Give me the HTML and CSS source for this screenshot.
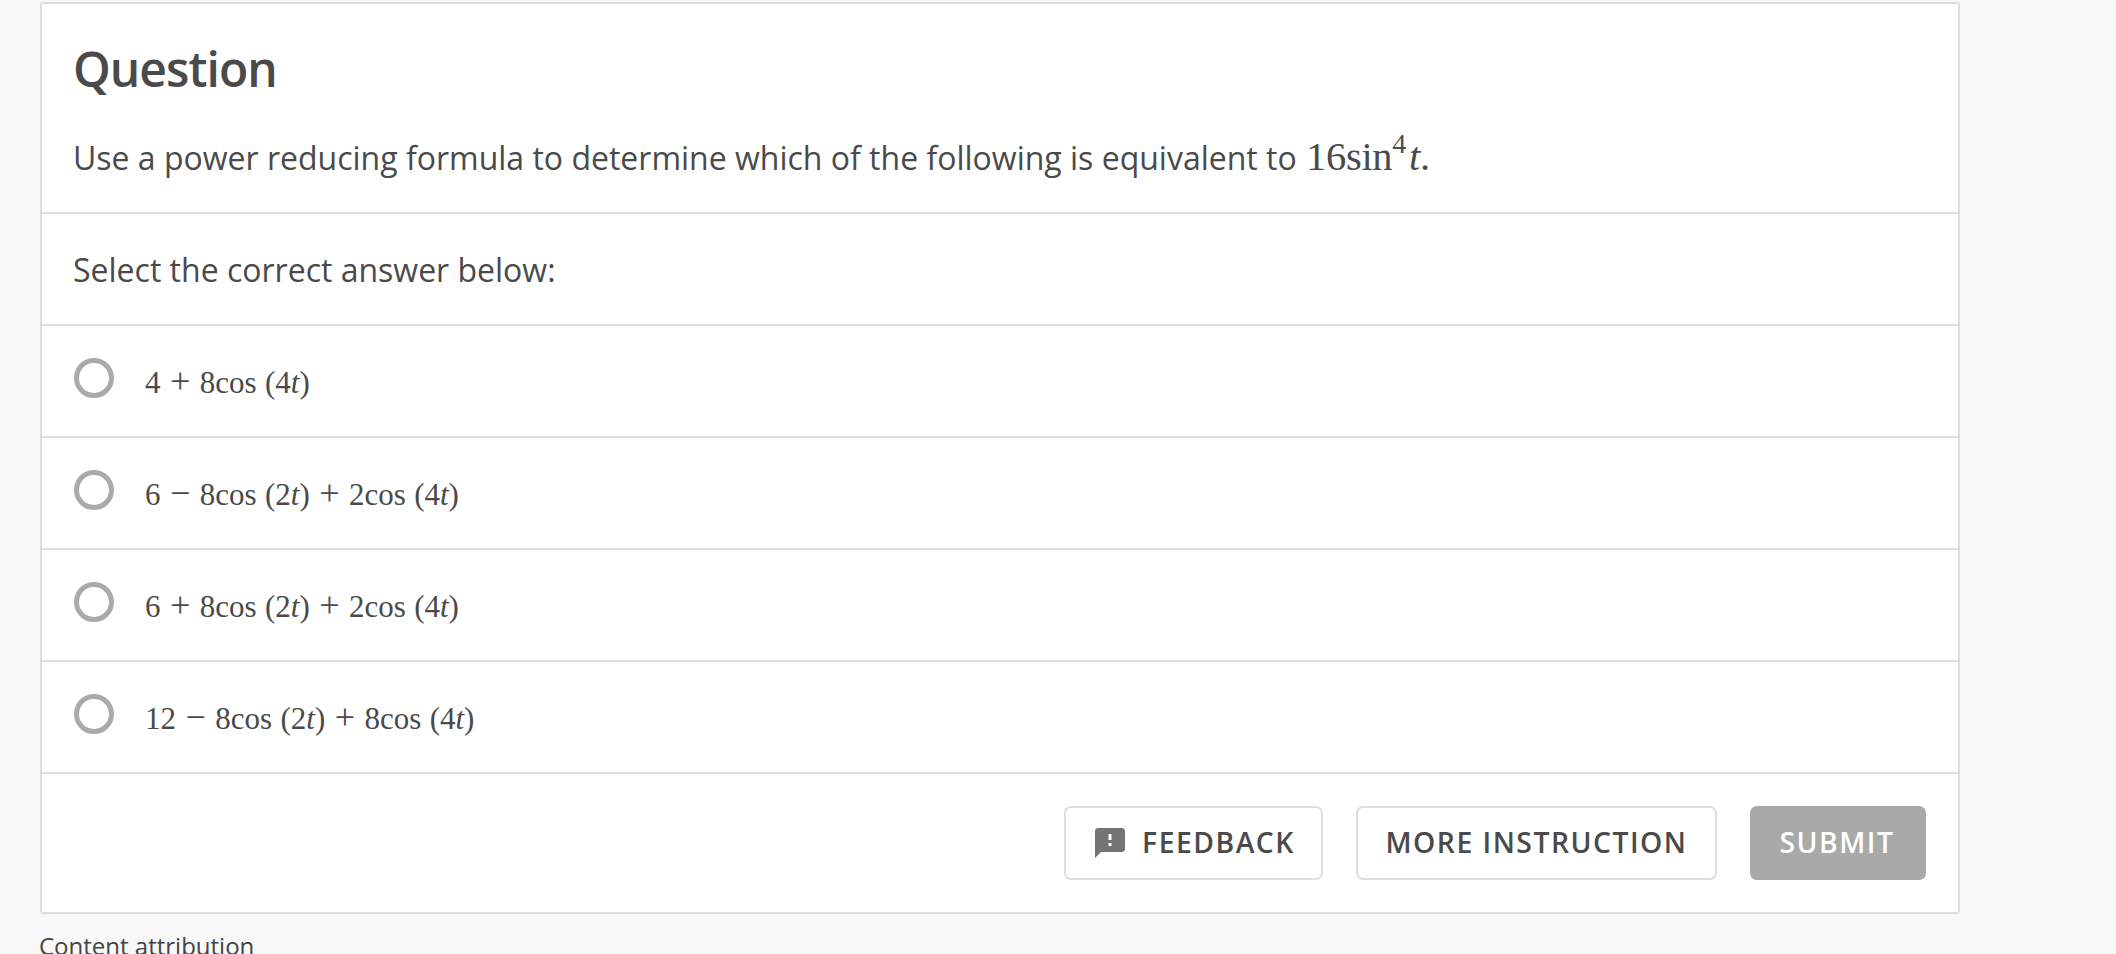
FILE: index.html
```html
<!DOCTYPE html>
<html lang="en">
<head>
<meta charset="utf-8">
<title>Question</title>
<link rel="stylesheet" href="styles.css">
</head>
<body>
<main class="page">
  <section class="card">
    <header class="head">
      <h1 class="title">Question</h1>
      <p class="prompt">Use a power reducing formula to determine which of the following is equivalent to <span class="math big">16sin<sup class="sup">4</sup><i class="t">t</i>.</span></p>
    </header>
    <div class="instruction">Select the correct answer below:</div>
    <ul class="options">
      <li class="option"><span class="radio"></span><span class="math">4<span class="op">+</span>8cos<span class="fn">(4<i>t</i>)</span></span></li>
      <li class="option"><span class="radio"></span><span class="math">6<span class="op">−</span>8cos<span class="fn">(2<i>t</i>)</span><span class="op">+</span>2cos<span class="fn">(4<i>t</i>)</span></span></li>
      <li class="option"><span class="radio"></span><span class="math">6<span class="op">+</span>8cos<span class="fn">(2<i>t</i>)</span><span class="op">+</span>2cos<span class="fn">(4<i>t</i>)</span></span></li>
      <li class="option"><span class="radio"></span><span class="math">12<span class="op">−</span>8cos<span class="fn">(2<i>t</i>)</span><span class="op">+</span>8cos<span class="fn">(4<i>t</i>)</span></span></li>
    </ul>
    <footer class="actions">
      <button class="btn feedback" type="button"><svg class="icon" viewBox="0 0 24 24" aria-hidden="true"><path d="M20 2H4c-1.1 0-1.99.9-1.99 2L2 22l4-4h14c1.1 0 2-.9 2-2V4c0-1.1-.9-2-2-2zm-7 12h-2v-2h2v2zm0-4h-2V6h2v4z"/></svg>Feedback</button>
      <button class="btn more" type="button">More Instruction</button>
      <button class="btn submit" type="button">Submit</button>
    </footer>
  </section>
  <p class="attribution">Content attribution</p>
</main>
</body>
</html>
```
FILE: styles.css
```css
* { box-sizing: border-box; }
html, body { margin: 0; height: 100%; overflow: hidden; }
body { background: #f8f8f8; color: #4a4a4a; font-family: "Open Sans", sans-serif; }
.page { width: 1920px; margin-left: 40px; padding-top: 2px; }
.card { background: #fff; border: 2px solid #dedede; border-radius: 3px; }
.head { height: 210px; padding: 33px 31px 0; border-bottom: 2px solid #dedede; }
.title { margin: 0; font-size: 48px; line-height: 64px; font-weight: 600; letter-spacing: -0.95px; }
.prompt { margin: 32px 0 0; font-size: 32px; line-height: 50px; white-space: nowrap; }
.instruction { height: 112px; padding: 0 31px; display: flex; align-items: center; border-bottom: 2px solid #dedede; font-size: 32px; }
.options { list-style: none; margin: 0; padding: 0; }
.option { height: 112px; padding: 0 31px 6px 32px; display: flex; align-items: center; gap: 31px; border-bottom: 2px solid #dedede; }
.radio { width: 40px; height: 40px; flex: none; border: 5px solid #aaa; border-radius: 50%; }
.math { font-family: "Liberation Serif", serif; font-size: 31px; line-height: 40px; padding-top: 10px; white-space: nowrap; }
.op { margin: 0 9.5px; font-size: 36px; line-height: 0; }
.fn { margin-left: 8.3px; }
.big { font-size: 40.5px; padding-top: 0; margin-left: 1px; letter-spacing: -0.3px; }
.sup { font-size: 28px; line-height: 0; vertical-align: 17px; margin-right: 3px; }
.actions { height: 138px; padding: 32px 32px 0; display: flex; justify-content: flex-end; align-items: flex-start; gap: 33px; }
.btn { height: 74px; border: 2px solid #dedede; border-radius: 7px; background: #fff; color: #4a4a4a; font-family: "Open Sans", sans-serif; font-size: 28.3px; font-weight: 600; letter-spacing: 1.5px; text-transform: uppercase; display: flex; align-items: center; justify-content: center; padding: 0 0 2px; }
.feedback { width: 259px; gap: 14px; padding-left: 0; }
.more { width: 361px; }
.submit { width: 176px; background: #a9a9a9; border-color: #a9a9a9; color: #fff; padding-right: 2px; }
.icon { width: 36px; height: 36px; fill: #757575; flex: none; margin-top: 2px; }
.attribution { margin: 16px 0 0 -1px; font-size: 24px; line-height: 32px; font-weight: 500; color: #444; }
```
